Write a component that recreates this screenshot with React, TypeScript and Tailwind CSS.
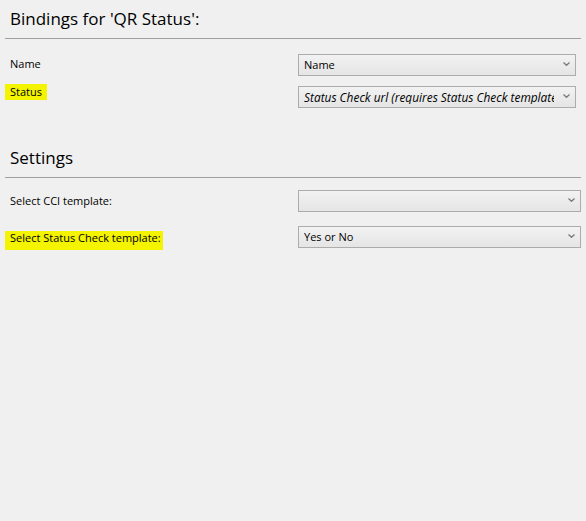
import React from "react";

const Chevron = () => (
  <svg width="7" height="4" viewBox="0 0 7 4" className="shrink-0 -mt-[2px]">
    <path d="M0.5 0.5 L3.5 3.3 L6.5 0.5" fill="none" stroke="#7a7a7a" strokeWidth="1.3" />
  </svg>
);

function Select({ value, italic, w }: { value: string; italic?: boolean; w: string }) {
  return (
    <div
      className={`${w} h-[22px] shrink-0 border border-[#acacac] bg-gradient-to-b from-[#f2f2f2] to-[#e5e5e5] flex items-center pl-[5px] pr-[5px] gap-[9px]`}
    >
      <span
        className={`flex-1 min-w-0 overflow-hidden whitespace-nowrap leading-[14px] text-black ${italic ? "italic text-[11.9px]" : "text-[11px]"}`}
      >
        {value}
      </span>
      <Chevron />
    </div>
  );
}

function Row({
  label,
  labelClass,
  children,
}: {
  label: string;
  labelClass: string;
  children: React.ReactNode;
}) {
  return (
    <div className="flex items-start">
      <div className="w-[298px] pl-[5px] flex items-start">
        <span className={`text-[11px] text-black whitespace-nowrap ${labelClass}`}>{label}</span>
      </div>
      {children}
    </div>
  );
}

function SectionHeader({ title, className }: { title: string; className?: string }) {
  return (
    <div className={className}>
      <div className="h-[38px] pt-[7px] pl-[10px] text-[17px] leading-[24px] text-black">{title}</div>
      <div className="ml-[5px] w-[576px] h-px bg-[#a0a0a0]" />
    </div>
  );
}

export default function App() {
  return (
    <div
      className="w-[586px] h-[521px] bg-[#f0f0f0] overflow-hidden"
      style={{ fontFamily: '"Open Sans", "Noto Sans", sans-serif' }}
    >
      <SectionHeader title="Bindings for 'QR Status':" />
      <div className="mt-[15px] flex flex-col gap-[10px]">
        <Row label="Name" labelClass="mt-[2px] pl-[5px] h-[16px] leading-[16px]">
          <Select value="Name" w="w-[278px]" />
        </Row>
        <Row label="Status" labelClass="-mt-[2px] pl-[5px] pr-[5px] h-[16px] leading-[16px] bg-[#f4f400]">
          <Select value="Status Check url (requires Status Check template)" italic w="w-[278px]" />
        </Row>
      </div>
      <SectionHeader title="Settings" className="mt-[31px]" />
      <div className="mt-[12px] flex flex-col gap-[14px]">
        <Row label="Select CCI template:" labelClass="mt-[3px] pl-[5px] h-[16px] leading-[16px]">
          <Select value="" w="w-[283px]" />
        </Row>
        <Row
          label="Select Status Check template:"
          labelClass="mt-[5px] pl-[5px] pr-[2px] h-[19px] leading-[14px] bg-[#f4f400]"
        >
          <Select value="Yes or No" w="w-[283px]" />
        </Row>
      </div>
    </div>
  );
}
